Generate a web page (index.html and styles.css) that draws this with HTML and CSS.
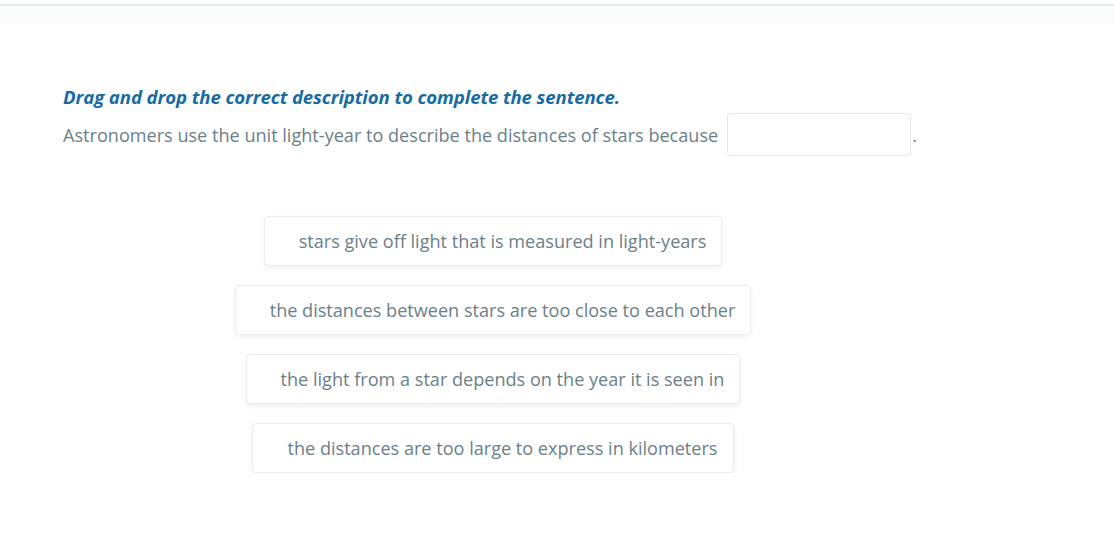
FILE: index.html
```html
<!DOCTYPE html>
<html>
<head>
<meta charset="utf-8">
<link rel="stylesheet" href="styles.css">
</head>
<body>
<div class="topbar"></div>
<main class="content">
  <h2 class="prompt">Drag and drop the correct description to complete the sentence.</h2>
  <p class="sentence">Astronomers use the unit light-year to describe the distances of stars because <span class="drop"></span>.</p>
  <div class="options">
    <div class="option">stars give off light that is measured in light-years</div>
    <div class="option">the distances between stars are too close to each other</div>
    <div class="option">the light from a star depends on the year it is seen in</div>
    <div class="option">the distances are too large to express in kilometers</div>
  </div>
</main>
</body>
</html>
```

FILE: styles.css
```css
html, body {
  margin: 0;
  padding: 0;
  background: #ffffff;
}
body {
  font-family: "Open Sans", "Noto Sans", sans-serif;
  color: #6b7f88;
}
.topbar {
  margin-top: 4px;
  height: 18px;
  border-top: 2px solid #e6eaea;
  background: #fafcfb;
}
.content {
  padding: 61px 0 0 63px;
}
.prompt {
  margin: 0;
  font-size: 18.6px;
  font-weight: 700;
  font-style: italic;
  color: #176ba3;
  line-height: 24px;
  letter-spacing: -0.1px;
}
.sentence {
  margin: 4px 0 0 0;
  font-size: 18.1px;
  line-height: 24px;
  display: flex;
  align-items: center;
}
.drop {
  display: inline-block;
  width: 182px;
  height: 41px;
  border: 1px solid #e6e8e8;
  border-radius: 4px;
  margin: 0 1px 0 9px;
  background: #fff;
}
.options {
  width: 860px;
  margin-top: 60px;
  display: flex;
  flex-direction: column;
  align-items: center;
  gap: 19px;
}
.option {
  box-sizing: border-box;
  height: 50px;
  display: flex;
  align-items: center;
  padding: 0 15px 0 34px;
  border: 1px solid #ebeded;
  border-radius: 4px;
  background: #fff;
  box-shadow: 0 2px 6px rgba(0, 0, 0, 0.06);
  font-size: 18.1px;
  color: #6b7f88;
}
```
